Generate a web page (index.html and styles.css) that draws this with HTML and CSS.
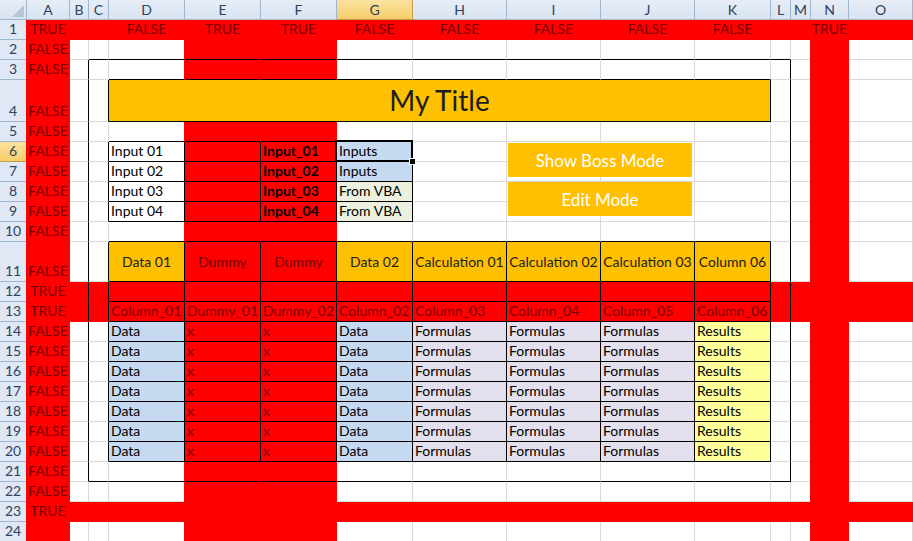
FILE: index.html
```html
<!DOCTYPE html>
<html lang="en">
<head>
    <meta charset="utf-8">
    <title>Boss Mode Sheet</title>
    <link rel="stylesheet" href="styles.css">
</head>
<body>

<!-- Worksheet -->
<div class="sheet">
<table class="grid">
    <colgroup>
        <col class="c-rh"><col class="c-a"><col class="c-b"><col class="c-s">
        <col class="c-m"><col class="c-m"><col class="c-m"><col class="c-m">
        <col class="c-w"><col class="c-w"><col class="c-w"><col class="c-m">
        <col class="c-s"><col class="c-s"><col class="c-n"><col class="c-o">
    </colgroup>

    <!-- Column headers -->
    <tr class="hdr">
        <th class="corner"><svg width="26" height="19" viewBox="0 0 26 19"><polygon points="24,5 24,17 12,17" fill="#b9c4d2"/></svg></th>
        <th>A</th><th>B</th><th>C</th><th>D</th><th>E</th><th>F</th><th class="sel">G</th>
        <th>H</th><th>I</th><th>J</th><th>K</th><th>L</th><th>M</th><th>N</th><th>O</th>
    </tr>

    <tr><th>1</th><td class="red c">TRUE</td><td class="red"></td><td class="red"></td><td class="red c">FALSE</td><td class="red c">TRUE</td><td class="red c">TRUE</td><td class="red c">FALSE</td><td class="red c">FALSE</td><td class="red c">FALSE</td><td class="red c">FALSE</td><td class="red c">FALSE</td><td class="red"></td><td class="red"></td><td class="red c">TRUE</td><td class="red"></td></tr>
    <tr><th>2</th><td class="red c">FALSE</td><td></td><td class="bb"></td><td class="bb"></td><td class="red bb"></td><td class="red bb"></td><td class="bb"></td><td class="bb"></td><td class="bb"></td><td class="bb"></td><td class="bb"></td><td class="bb"></td><td></td><td class="red"></td><td></td></tr>
    <tr><th>3</th><td class="red c">FALSE</td><td class="br"></td><td></td><td class="bb"></td><td class="red bb"></td><td class="red bb"></td><td class="bb"></td><td class="bb"></td><td class="bb"></td><td class="bb"></td><td class="bb"></td><td class="br"></td><td></td><td class="red"></td><td></td></tr>

    <!-- Title -->
    <tr class="row-title"><th>4</th><td class="red c">FALSE</td><td class="br"></td><td class="br"></td><td colspan="8" class="org t title">My Title</td><td class="br"></td><td></td><td class="red"></td><td></td></tr>
    <tr><th>5</th><td class="red c">FALSE</td><td class="br"></td><td></td><td class="bb"></td><td class="red bb"></td><td class="red bb"></td><td class="bb"></td><td></td><td></td><td></td><td></td><td class="br"></td><td></td><td class="red"></td><td></td></tr>

    <!-- Inputs -->
    <tr><th class="sel">6</th><td class="red c">FALSE</td><td class="br"></td><td class="br"></td><td class="t">Input 01</td><td class="red t"></td><td class="red t b">Input_01</td><td class="blu t cur">Inputs</td><td></td><td></td><td></td><td></td><td class="br"></td><td></td><td class="red"></td><td></td></tr>
    <tr><th>7</th><td class="red c">FALSE</td><td class="br"></td><td class="br"></td><td class="t">Input 02</td><td class="red t"></td><td class="red t b">Input_02</td><td class="blu t">Inputs</td><td></td><td></td><td></td><td></td><td class="br"></td><td></td><td class="red"></td><td></td></tr>
    <tr><th>8</th><td class="red c">FALSE</td><td class="br"></td><td class="br"></td><td class="t">Input 03</td><td class="red t"></td><td class="red t b">Input_03</td><td class="grn t">From VBA</td><td></td><td></td><td></td><td></td><td class="br"></td><td></td><td class="red"></td><td></td></tr>
    <tr><th>9</th><td class="red c">FALSE</td><td class="br"></td><td class="br"></td><td class="t">Input 04</td><td class="red t"></td><td class="red t b">Input_04</td><td class="grn t">From VBA</td><td></td><td></td><td></td><td></td><td class="br"></td><td></td><td class="red"></td><td></td></tr>
    <tr><th>10</th><td class="red c">FALSE</td><td class="br"></td><td></td><td class="bb"></td><td class="red bb"></td><td class="red bb"></td><td class="bb"></td><td class="bb"></td><td class="bb"></td><td class="bb"></td><td class="bb"></td><td class="br"></td><td></td><td class="red"></td><td></td></tr>

    <!-- Data table -->
    <tr class="row-head"><th>11</th><td class="red c">FALSE</td><td class="br"></td><td class="br"></td><td class="org t hd">Data 01</td><td class="red t hd">Dummy</td><td class="red t hd">Dummy</td><td class="org t hd">Data 02</td><td class="org t hd">Calculation 01</td><td class="org t hd">Calculation 02</td><td class="org t hd">Calculation 03</td><td class="org t hd">Column 06</td><td class="br"></td><td></td><td class="red"></td><td></td></tr>
    <tr><th>12</th><td class="red c">TRUE</td><td class="red br"></td><td class="red br"></td><td class="red t"></td><td class="red t"></td><td class="red t"></td><td class="red t"></td><td class="red t"></td><td class="red t"></td><td class="red t"></td><td class="red t"></td><td class="red br"></td><td class="red"></td><td class="red"></td><td class="red"></td></tr>
    <tr><th>13</th><td class="red c">TRUE</td><td class="red br"></td><td class="red br"></td><td class="red t">Column_01</td><td class="red t">Dummy_01</td><td class="red t">Dummy_02</td><td class="red t">Column_02</td><td class="red t">Column_03</td><td class="red t">Column_04</td><td class="red t">Column_05</td><td class="red t">Column_06</td><td class="red br"></td><td class="red"></td><td class="red"></td><td class="red"></td></tr>
    <tr><th>14</th><td class="red c">FALSE</td><td class="br"></td><td class="br"></td><td class="blu t">Data</td><td class="red t">x</td><td class="red t">x</td><td class="blu t">Data</td><td class="lav t">Formulas</td><td class="lav t">Formulas</td><td class="lav t">Formulas</td><td class="yel t">Results</td><td class="br"></td><td></td><td class="red"></td><td></td></tr>
    <tr><th>15</th><td class="red c">FALSE</td><td class="br"></td><td class="br"></td><td class="blu t">Data</td><td class="red t">x</td><td class="red t">x</td><td class="blu t">Data</td><td class="lav t">Formulas</td><td class="lav t">Formulas</td><td class="lav t">Formulas</td><td class="yel t">Results</td><td class="br"></td><td></td><td class="red"></td><td></td></tr>
    <tr><th>16</th><td class="red c">FALSE</td><td class="br"></td><td class="br"></td><td class="blu t">Data</td><td class="red t">x</td><td class="red t">x</td><td class="blu t">Data</td><td class="lav t">Formulas</td><td class="lav t">Formulas</td><td class="lav t">Formulas</td><td class="yel t">Results</td><td class="br"></td><td></td><td class="red"></td><td></td></tr>
    <tr><th>17</th><td class="red c">FALSE</td><td class="br"></td><td class="br"></td><td class="blu t">Data</td><td class="red t">x</td><td class="red t">x</td><td class="blu t">Data</td><td class="lav t">Formulas</td><td class="lav t">Formulas</td><td class="lav t">Formulas</td><td class="yel t">Results</td><td class="br"></td><td></td><td class="red"></td><td></td></tr>
    <tr><th>18</th><td class="red c">FALSE</td><td class="br"></td><td class="br"></td><td class="blu t">Data</td><td class="red t">x</td><td class="red t">x</td><td class="blu t">Data</td><td class="lav t">Formulas</td><td class="lav t">Formulas</td><td class="lav t">Formulas</td><td class="yel t">Results</td><td class="br"></td><td></td><td class="red"></td><td></td></tr>
    <tr><th>19</th><td class="red c">FALSE</td><td class="br"></td><td class="br"></td><td class="blu t">Data</td><td class="red t">x</td><td class="red t">x</td><td class="blu t">Data</td><td class="lav t">Formulas</td><td class="lav t">Formulas</td><td class="lav t">Formulas</td><td class="yel t">Results</td><td class="br"></td><td></td><td class="red"></td><td></td></tr>
    <tr><th>20</th><td class="red c">FALSE</td><td class="br"></td><td class="br"></td><td class="blu t">Data</td><td class="red t">x</td><td class="red t">x</td><td class="blu t">Data</td><td class="lav t">Formulas</td><td class="lav t">Formulas</td><td class="lav t">Formulas</td><td class="yel t">Results</td><td class="br"></td><td></td><td class="red"></td><td></td></tr>
    <tr><th>21</th><td class="red c">FALSE</td><td class="br"></td><td class="bb"></td><td class="bb"></td><td class="red bb"></td><td class="red bb"></td><td class="bb"></td><td class="bb"></td><td class="bb"></td><td class="bb"></td><td class="bb"></td><td class="br bb"></td><td></td><td class="red"></td><td></td></tr>
    <tr><th>22</th><td class="red c">FALSE</td><td></td><td></td><td></td><td class="red"></td><td class="red"></td><td></td><td></td><td></td><td></td><td></td><td></td><td></td><td class="red"></td><td></td></tr>
    <tr><th>23</th><td class="red c">TRUE</td><td class="red"></td><td class="red"></td><td class="red"></td><td class="red"></td><td class="red"></td><td class="red"></td><td class="red"></td><td class="red"></td><td class="red"></td><td class="red"></td><td class="red"></td><td class="red"></td><td class="red"></td><td class="red"></td></tr>
    <tr><th>24</th><td class="red"></td><td></td><td></td><td></td><td class="red"></td><td class="red"></td><td></td><td></td><td></td><td></td><td></td><td></td><td></td><td class="red"></td><td></td></tr>
</table>

<!-- Shapes floating over the sheet -->
<div class="btn btn-boss">Show Boss Mode</div>
<div class="btn btn-edit">Edit Mode</div>
</div>

</body>
</html>
```

FILE: styles.css
```css
/* General Layout */
html, body {
    margin: 0;
    padding: 0;
    overflow: hidden;
    background: #fff;
}

body {
    font-family: Lato, 'Liberation Sans', sans-serif;
    font-size: 14px;
    color: #000;
}

.sheet {
    position: relative;
    width: 913px;
}

/* Grid */
.grid {
    table-layout: fixed;
    width: 913px;
    border-collapse: separate;
    border-spacing: 0;
}

.c-rh { width: 27px; }
.c-a  { width: 43px; }
.c-b  { width: 19px; }
.c-s  { width: 20px; }
.c-m  { width: 76px; }
.c-w  { width: 94px; }
.c-n  { width: 38px; }
.c-o  { width: 64px; }

.grid tr { height: 20px; }
.grid tr.row-title { height: 42px; }
.grid tr.row-head { height: 40px; }

.grid td,
.grid th {
    box-sizing: border-box;
    padding: 0 2px 2px;
    line-height: 17px;
    white-space: nowrap;
    overflow: hidden;
    vertical-align: bottom;
    text-align: left;
}

.grid td {
    border-right: 1px solid #d9d9d9;
    border-bottom: 1px solid #d9d9d9;
}

/* Row and column headers */
.grid th {
    background: #dfe8f4;
    color: #2e4261;
    font-weight: normal;
    text-align: center;
    border-right: 1px solid #9eb6ce;
    border-bottom: 1px solid #9eb6ce;
}

.grid .hdr th {
    vertical-align: middle;
    padding-bottom: 0;
    background: linear-gradient(#e6edf7, #d9e4f1);
}

.grid th.corner {
    padding: 0;
    line-height: 0;
}

.grid th.sel,
.grid .hdr th.sel {
    background: linear-gradient(#fbe3a0, #f6cd6a);
    border-color: #c89b48;
}

/* Fills */
.red {
    background: #ff0000;
    border-color: #ff0000 !important;
    color: #780000;
}

/* fill also covers the gridline on its left, as Excel does */
.red:not(.t):not(.br) {
    box-shadow: -1px 0 0 #ff0000;
}

.org { background: #ffc000; color: #1c1c1c; }
.blu { background: #c5d9f1; }
.grn { background: #ebf1de; }
.lav { background: #e4dfec; }
.yel { background: #ffff99; }

/* Borders */
.grid td.br,
.grid td.bb,
.grid td.t {
    position: relative;
}

.grid td.br { border-right-color: #000 !important; }
.grid td.bb { border-bottom-color: #000 !important; }
.grid td.t {
    border-right-color: #000 !important;
    border-bottom-color: #000 !important;
}

/* Text */
.grid td.c {
    text-align: center;
    padding-left: 0;
    padding-right: 0;
}

.b {
    font-weight: bold;
    color: #000;
}

.hd {
    text-align: center !important;
    vertical-align: middle !important;
    padding-bottom: 0 !important;
}

.title {
    font-size: 28px;
    text-align: center !important;
    vertical-align: middle !important;
    line-height: 34px;
    padding-bottom: 0 !important;
}

/* Active cell */
.grid td.cur {
    overflow: visible;
    z-index: 2;
}

.grid td.cur::after {
    content: "";
    position: absolute;
    left: -2px;
    top: -2px;
    right: -1px;
    bottom: -1px;
    border: 2px solid #000;
}

.grid td.cur::before {
    content: "";
    position: absolute;
    right: -4px;
    bottom: -4px;
    width: 5px;
    height: 5px;
    background: #000;
    border: 1px solid #fff;
    z-index: 1;
}

/* Buttons */
.btn {
    position: absolute;
    left: 508px;
    width: 184px;
    height: 34px;
    background: #ffc000;
    color: #fff;
    font-size: 17px;
    display: flex;
    align-items: center;
    justify-content: center;
    z-index: 3;
}

.btn-boss { top: 143px; }
.btn-edit { top: 182px; }
```
